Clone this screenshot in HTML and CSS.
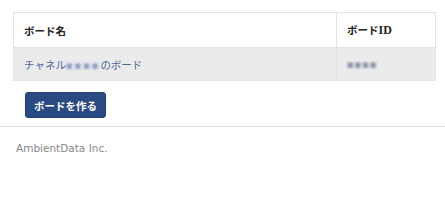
FILE: index.html
```html
<!DOCTYPE html>
<html lang="ja">
<head>
    <meta charset="UTF-8">
    <title>ボード一覧</title>
    <link rel="stylesheet" href="styles.css">
</head>
<body>

    <!-- ボード一覧 -->
    <div class="main">
        <table class="board-table">
            <thead>
                <tr>
                    <th class="col-name">ボード名</th>
                    <th class="col-id">ボード<span class="id-latin">ID</span></th>
                </tr>
            </thead>
            <tbody>
                <tr>
                    <td><a href="#">チャネル<span class="masked">■■■■</span>のボード</a></td>
                    <td><span class="masked id">■■■■</span></td>
                </tr>
            </tbody>
        </table>

        <button class="btn-create">ボードを作る</button>
    </div>

    <!-- フッター -->
    <div class="footer">AmbientData Inc.</div>

</body>
</html>
```

FILE: styles.css
```css
body {
    margin: 0;
    font-family: "DejaVu Sans", "Noto Sans CJK JP", sans-serif;
    background: #fff;
    color: #333;
}

.main {
    padding: 12px 9px 8px 13px;
}

/* テーブル */
.board-table {
    width: 100%;
    border-collapse: collapse;
    font-size: 10.5px;
}

.board-table th,
.board-table td {
    border: 1px solid #e3e3e3;
    text-align: left;
    padding: 0 10px;
}

.board-table th {
    height: 34px;
    font-weight: bold;
    color: #222;
    background: #fff;
}

.board-table .id-latin {
    font-family: "Liberation Serif", serif;
    font-size: 12px;
}

.board-table td {
    height: 32px;
    background: #ebebeb;
}

.board-table .col-id {
    width: 78px;
}

.board-table a {
    color: #4a67a0;
    text-decoration: none;
}

.masked {
    filter: blur(0.8px);
    font-size: 7px;
    letter-spacing: 2px;
    color: #8d9ec4;
    vertical-align: 1px;
}

.masked.id {
    color: #8a94a8;
    letter-spacing: 1px;
}

/* ボタン */
.btn-create {
    margin: 11px 0 0 12px;
    height: 26px;
    padding: 0 8px;
    background: #2b4a84;
    color: #fff;
    border: 1px solid #244078;
    border-radius: 3px;
    font-family: "DejaVu Sans", "Noto Sans CJK JP", sans-serif;
    font-size: 10.5px;
    font-weight: bold;
    cursor: pointer;
}

/* フッター */
.footer {
    border-top: 1px solid #ddd;
    padding: 15px 16px;
    font-size: 10.5px;
    color: #888;
}
```
